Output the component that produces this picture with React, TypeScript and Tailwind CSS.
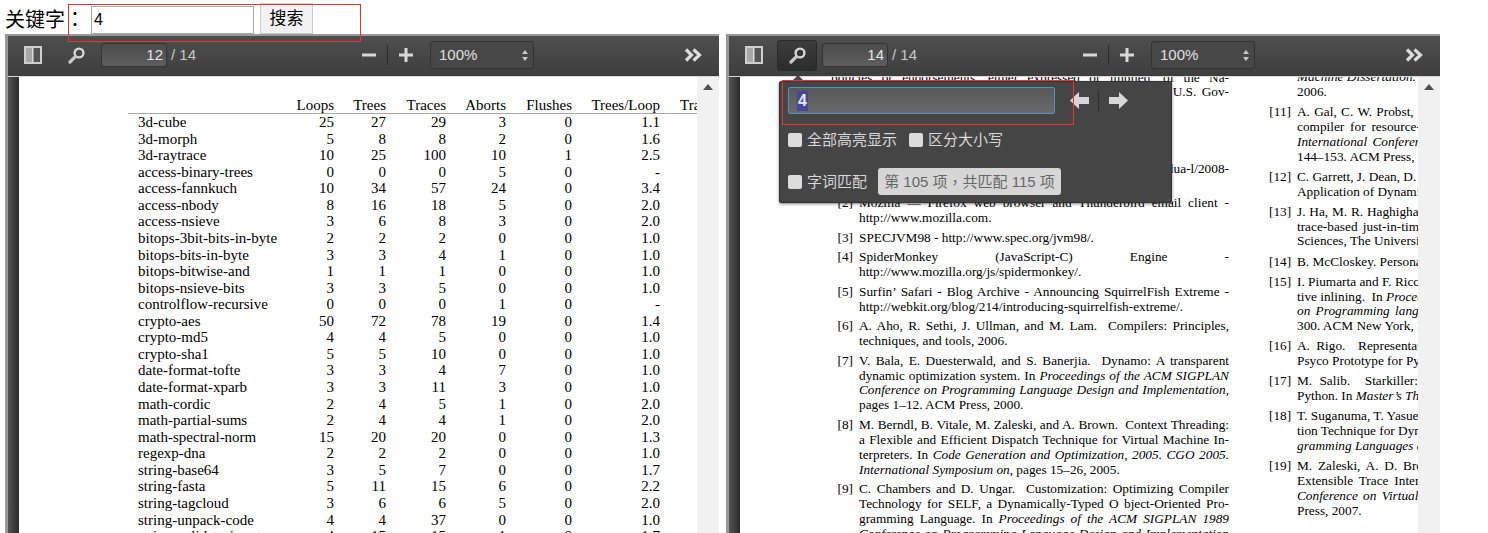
import type { ReactNode } from 'react';
import clsx from 'clsx';

const rows: (string | number)[][] = [
  ['3d-cube', 25, 27, 29, 3, 0, '1.1'],
  ['3d-morph', 5, 8, 8, 2, 0, '1.6'],
  ['3d-raytrace', 10, 25, 100, 10, 1, '2.5'],
  ['access-binary-trees', 0, 0, 0, 5, 0, '-'],
  ['access-fannkuch', 10, 34, 57, 24, 0, '3.4'],
  ['access-nbody', 8, 16, 18, 5, 0, '2.0'],
  ['access-nsieve', 3, 6, 8, 3, 0, '2.0'],
  ['bitops-3bit-bits-in-byte', 2, 2, 2, 0, 0, '1.0'],
  ['bitops-bits-in-byte', 3, 3, 4, 1, 0, '1.0'],
  ['bitops-bitwise-and', 1, 1, 1, 0, 0, '1.0'],
  ['bitops-nsieve-bits', 3, 3, 5, 0, 0, '1.0'],
  ['controlflow-recursive', 0, 0, 0, 1, 0, '-'],
  ['crypto-aes', 50, 72, 78, 19, 0, '1.4'],
  ['crypto-md5', 4, 4, 5, 0, 0, '1.0'],
  ['crypto-sha1', 5, 5, 10, 0, 0, '1.0'],
  ['date-format-tofte', 3, 3, 4, 7, 0, '1.0'],
  ['date-format-xparb', 3, 3, 11, 3, 0, '1.0'],
  ['math-cordic', 2, 4, 5, 1, 0, '2.0'],
  ['math-partial-sums', 2, 4, 4, 1, 0, '2.0'],
  ['math-spectral-norm', 15, 20, 20, 0, 0, '1.3'],
  ['regexp-dna', 2, 2, 2, 0, 0, '1.0'],
  ['string-base64', 3, 5, 7, 0, 0, '1.7'],
  ['string-fasta', 5, 11, 15, 6, 0, '2.2'],
  ['string-tagcloud', 3, 6, 6, 5, 0, '2.0'],
  ['string-unpack-code', 4, 4, 37, 0, 0, '1.0'],
  ['string-validate-input', 4, 15, 15, 1, 0, '1.7'],
];

const headers = ['Loops', 'Trees', 'Traces', 'Aborts', 'Flushes', 'Trees/Loop'];
const tableCols = 'grid grid-cols-[156px_40px_52px_60px_60px_66px_88px_80px] pl-[10px]';

function SidebarIcon() {
  return (
    <svg width="18" height="18" viewBox="0 0 18 18" className="shrink-0">
      <rect x="1" y="1" width="16" height="16" fill="#555" stroke="#cfcfcf" strokeWidth="2" />
      <rect x="2" y="2" width="6" height="14" fill="#a8a8a8" />
      <rect x="8" y="2" width="1.5" height="14" fill="#dcdcdc" />
    </svg>
  );
}

function SearchIcon() {
  return (
    <svg width="17" height="17" viewBox="0 0 17 17">
      <circle cx="11" cy="6" r="4.4" fill="none" stroke="#d8d8d8" strokeWidth="2.4" />
      <path d="M7.4 9.6 2 15" stroke="#c8c8c8" strokeWidth="3.2" strokeLinecap="round" />
    </svg>
  );
}

function Toolbar({ page, active }: { page: number; active?: boolean }) {
  return (
    <div className="relative z-10 flex h-10 shrink-0 items-center bg-linear-to-b from-[#4e4e4e] to-[#3e3e3e] pb-0.5 text-[15px] text-[#d4d4d4] shadow-[0_1px_0_#d8d8d8]">
      <div className="ml-4">
        <SidebarIcon />
      </div>
      <div
        className={clsx(
          'ml-[14px] flex h-[31px] w-10 items-center justify-center rounded-[3px]',
          active && 'border border-[#2a2a2a] bg-linear-to-b from-[#3c3c3c] to-[#2c2c2c]',
        )}
      >
        <SearchIcon />
      </div>
      <div className="ml-[5px] flex h-6 w-[66px] items-center justify-end rounded-[3px] border border-[#333] bg-linear-to-b from-[#4c4c4c] to-[#5e5e5e] pr-[3px] text-[#e4e4e4]">
        {page}
      </div>
      <span className="ml-1 text-[#c8c8c8]">/ 14</span>
      <div className="flex-1" />
      <svg width="14" height="14" viewBox="0 0 14 14">
        <rect x="0" y="5.5" width="14" height="3" fill="#d8d8d8" />
      </svg>
      <div className="ml-[11px] h-[20px] w-px bg-[#2c2c2c]" />
      <svg width="14" height="14" viewBox="0 0 14 14" className="ml-[11px]">
        <path d="M0 5.5h5.5V0h3v5.5H14v3H8.5V14h-3V8.5H0z" fill="#d8d8d8" />
      </svg>
      <div className="ml-[17px] flex h-7 w-[104px] items-center justify-between rounded-[3px] border border-[#333] bg-[#474747] pl-2 pr-[5px] text-[#e0e0e0]">
        <span>100%</span>
        <svg width="6" height="11" viewBox="0 0 6 11">
          <path d="M3 0 6 4H0zM3 11 0 7h6z" fill="#c8c8c8" />
        </svg>
      </div>
      <svg width="18" height="14" viewBox="0 0 18 14" className="ml-[150px] mr-[17px]">
        <path d="M2 1.5 7.5 7 2 12.5M9.5 1.5 15.5 7l-6 5.5" fill="none" stroke="#dcdcdc" strokeWidth="3.2" />
      </svg>
    </div>
  );
}

function Scrollbar() {
  return (
    <div className="flex w-[22px] shrink-0 justify-center bg-[#f1f1f1] pt-2">
      <svg width="10" height="6" viewBox="0 0 10 6">
        <path d="M5 0l5 6H0z" fill="#505050" />
      </svg>
    </div>
  );
}

function Viewer({ page, active, children, overlay }: { page: number; active?: boolean; children: ReactNode; overlay?: ReactNode }) {
  return (
    <div className="relative flex h-[499px] w-[714px] shrink-0 flex-col border-l-[3px] border-t-2 border-[#999]">
      <Toolbar page={page} active={active} />
      <div className="flex min-h-0 flex-1 [font-family:'Liberation_Serif',serif] text-black">
        <div className="w-[11px] shrink-0 bg-linear-to-r from-[#555] to-[#2a2a2a]" />
        <div className="min-w-0 flex-1 overflow-hidden bg-white">{children}</div>
        <Scrollbar />
      </div>
      {overlay}
    </div>
  );
}

function BenchTable() {
  return (
    <div className="pl-[109px] pt-[21px] text-[15px] leading-[16.56px]">
      <div className={clsx(tableCols, 'h-[17px] border-b border-[#aaa]')}>
        <span />
        {headers.map((h) => (
          <span key={h} className="text-right">
            {h}
          </span>
        ))}
        <span className="overflow-hidden whitespace-nowrap pl-5">Traces/Loop</span>
      </div>
      {rows.map((r) => (
        <div key={r[0]} className={tableCols}>
          {r.map((v, i) => (
            <span key={i} className={clsx(i > 0 && 'text-right', 'whitespace-nowrap')}>
              {v}
            </span>
          ))}
        </div>
      ))}
    </div>
  );
}

function L({ children, j, className }: { children: ReactNode; j?: boolean; className?: string }) {
  return (
    <div className={clsx('h-[14.9px] whitespace-nowrap', j && '[text-align:justify] [text-align-last:justify]', className)}>
      {children}
    </div>
  );
}

function Ref({ n, children, className = 'mt-[4.7px]' }: { n: number; children: ReactNode; className?: string }) {
  return (
    <div className={clsx('flex', className)}>
      <span className="w-[28px] shrink-0 pr-[6px] text-right">[{n}]</span>
      <div className="min-w-0 flex-1">{children}</div>
    </div>
  );
}

const gap2 = 'mt-[5.2px]';

function PaperPage() {
  return (
    <div className="flex items-start text-[13.3px] leading-[14.9px]">
      <div className="ml-[91px] -mt-[5.5px] w-[398px] shrink-0">
        <L j>policies or endorsements, either expressed or implied, of the Na-</L>
        <L j>tional Science Foundation, the Department of Energy, or the U.S. Gov-</L>
        <L>ernment.</L>
        <div className="mt-[31.7px]">
          <Ref n={1} className="mt-[5px]">
            <L>Lua mailing list.</L>
            <L j>Trace trees - http://lua-users.org/lists/lua-l/2008-</L>
            <L>02/msg00051.html.</L>
          </Ref>
        </div>
        <Ref n={2}>
          <L j>Mozilla — Firefox web browser and Thunderbird email client -</L>
          <L>http://www.mozilla.com.</L>
        </Ref>
        <Ref n={3}>
          <L>SPECJVM98 - http://www.spec.org/jvm98/.</L>
        </Ref>
        <Ref n={4}>
          <L j>SpiderMonkey (JavaScript-C) Engine -</L>
          <L>http://www.mozilla.org/js/spidermonkey/.</L>
        </Ref>
        <Ref n={5}>
          <L j>Surfin’ Safari - Blog Archive - Announcing SquirrelFish Extreme -</L>
          <L>http://webkit.org/blog/214/introducing-squirrelfish-extreme/.</L>
        </Ref>
        <Ref n={6}>
          <L j>A. Aho, R. Sethi, J. Ullman, and M. Lam. &nbsp;Compilers: Principles,</L>
          <L>techniques, and tools, 2006.</L>
        </Ref>
        <Ref n={7}>
          <L j>V. Bala, E. Duesterwald, and S. Banerjia. &nbsp;Dynamo: A transparent</L>
          <L j>dynamic optimization system. In <i>Proceedings of the ACM SIGPLAN</i></L>
          <L j><i>Conference on Programming Language Design and Implementation,</i></L>
          <L>pages 1–12. ACM Press, 2000.</L>
        </Ref>
        <Ref n={8}>
          <L j>M. Berndl, B. Vitale, M. Zaleski, and A. Brown. &nbsp;Context Threading:</L>
          <L j>a Flexible and Efficient Dispatch Technique for Virtual Machine In-</L>
          <L j>terpreters. In <i>Code Generation and Optimization, 2005. CGO 2005.</i></L>
          <L><i>International Symposium on</i>, pages 15–26, 2005.</L>
        </Ref>
        <Ref n={9}>
          <L j>C. Chambers and D. Ungar. &nbsp;Customization: Optimizing Compiler</L>
          <L j>Technology for SELF, a Dynamically-Typed O bject-Oriented Pro-</L>
          <L j>gramming Language. In <i>Proceedings of the ACM SIGPLAN 1989</i></L>
          <L j><i>Conference on Programming Language Design and Implementation</i></L>
        </Ref>
      </div>
      <div className="ml-10 -mt-[6px] w-[399px] shrink-0">
        <div className="pl-[28px]">
          <L><i>Machine Dissertation.</i> PhD thesis,</L>
          <L>2006.</L>
        </div>
        <Ref n={11} className={gap2}>
          <L className="[word-spacing:1px]">A. Gal, C. W. Probst, and M. Franz.</L>
          <L className="[word-spacing:2.5px]">compiler for resource-constrained</L>
          <L className="[word-spacing:2px]"><i>International Conference</i></L>
          <L>144–153. ACM Press, 2006.</L>
        </Ref>
        <Ref n={12} className={gap2}>
          <L>C. Garrett, J. Dean, D. Grove,</L>
          <L>Application of Dynamic</L>
        </Ref>
        <Ref n={13} className={gap2}>
          <L className="[word-spacing:0.5px]">J. Ha, M. R. Haghighat, S. Cong,</L>
          <L className="[word-spacing:2px]">trace-based just-in-time</L>
          <L>Sciences, The University of</L>
        </Ref>
        <Ref n={14} className={gap2}>
          <L>B. McCloskey. Personal</L>
        </Ref>
        <Ref n={15} className={gap2}>
          <L>I. Piumarta and F. Riccardi.</L>
          <L>tive inlining. &nbsp;In <i>Proceedings</i></L>
          <L className="[word-spacing:2px]"><i>on Programming language</i></L>
          <L>300. ACM New York, NY,</L>
        </Ref>
        <Ref n={16} className={gap2}>
          <L className="[word-spacing:3px]">A. Rigo. &nbsp;Representation-based</L>
          <L>Psyco Prototype for Python.</L>
        </Ref>
        <Ref n={17} className={gap2}>
          <L className="[word-spacing:4px]">M. Salib. &nbsp;Starkiller: A</L>
          <L>Python. In <i>Master’s Thesis</i></L>
        </Ref>
        <Ref n={18} className={gap2}>
          <L>T. Suganuma, T. Yasue, M.</L>
          <L>tion Technique for Dynamic</L>
          <L><i>gramming Languages and</i></L>
        </Ref>
        <Ref n={19} className={gap2}>
          <L className="[word-spacing:2.5px]">M. Zaleski, A. D. Brown,</L>
          <L className="[word-spacing:2.5px]">Extensible Trace Interpreter</L>
          <L className="[word-spacing:2px]"><i>Conference on Virtual</i></L>
          <L>Press, 2007.</L>
        </Ref>
      </div>
    </div>
  );
}

function Check({ label }: { label: string }) {
  return (
    <span className="flex items-center">
      <span className="h-3.5 w-3.5 rounded-[2px] bg-[#dcdcdc]" />
      <span className="ml-[5px]">{label}</span>
    </span>
  );
}

function FindBar() {
  return (
    <div className="absolute left-[50px] top-[45px] z-20 h-[122px] w-[393px] rounded-[2px] border border-[#333] bg-[#454545] pl-2 pt-[5px] text-[15px] leading-[20px] text-[#d8d8d8] shadow-[0_1px_3px_rgba(0,0,0,0.5)] [font-family:'Liberation_Sans','Noto_Sans_CJK_SC',sans-serif]">
      <svg width="14" height="7" viewBox="0 0 14 7" className="absolute -top-[7px] left-[11px]">
        <path d="M7 0l7 7H0z" fill="#454545" />
      </svg>
      <div className="flex items-center">
        <div className="flex h-[27px] w-[267px] items-center rounded-[2px] border border-[#4f94c8] bg-linear-to-b from-[#585858] to-[#6a6a6a] pl-2 text-[16px] font-bold text-[#e8e8e8]">
          <span className="bg-[#46469a] px-px">4</span>
        </div>
        <svg width="19" height="17" viewBox="0 0 19 17" className="ml-[15px]">
          <path d="M0 8.5 9 0v5h10v7H9v5z" fill="#d8d8d8" />
        </svg>
        <div className="ml-[9px] h-[20px] w-px bg-[#2c2c2c]" />
        <svg width="19" height="17" viewBox="0 0 19 17" className="ml-[10px]">
          <path d="M19 8.5 10 0v5H0v7h10v5z" fill="#d8d8d8" />
        </svg>
      </div>
      <div className="mt-[16px] flex h-5 items-center gap-3">
        <Check label="全部高亮显示" />
        <Check label="区分大小写" />
      </div>
      <div className="mt-[18px] flex items-center">
        <Check label="字词匹配" />
        <span className="ml-[11px] flex h-[27px] w-[183px] items-center justify-center rounded-[3px] bg-[#d6d6d6] text-[#666]">
          第 105 项<span className="[font-family:'Noto_Sans_CJK_TC',sans-serif]">，</span>共匹配 115 项
        </span>
      </div>
    </div>
  );
}

export default function App() {
  return (
    <div className="relative h-[533px] w-[1488px] overflow-hidden bg-white [font-family:'Liberation_Sans','Noto_Sans_CJK_SC',sans-serif]">
      <div className="flex h-[34px] items-start pl-[5px] text-black">
        <span className="mt-[5px] text-[20px] leading-[28px]">
          关键字<span className="[font-family:'Noto_Sans_CJK_TC',sans-serif]">：</span>
        </span>
        <input
          defaultValue="4"
          readOnly
          className="ml-1.5 mt-1.5 h-7 w-[163px] border border-[#aaa] px-0.5 text-[16px] outline-none"
        />
        <button className="ml-1.5 mt-[3px] h-[31px] w-[53px] border border-[#ccc] bg-[#f2f2f2] text-[17px]">搜索</button>
      </div>
      <div className="flex gap-[7px] pl-[5px]">
        <Viewer page={12}>
          <BenchTable />
        </Viewer>
        <Viewer page={14} active overlay={<FindBar />}>
          <PaperPage />
        </Viewer>
      </div>
      <div className="absolute left-[68px] top-1 z-30 h-[38px] w-[293px] border border-[#f03030]" />
      <div className="absolute left-[782px] top-20 z-30 h-[45px] w-[292px] border border-[#f03030]" />
    </div>
  );
}
